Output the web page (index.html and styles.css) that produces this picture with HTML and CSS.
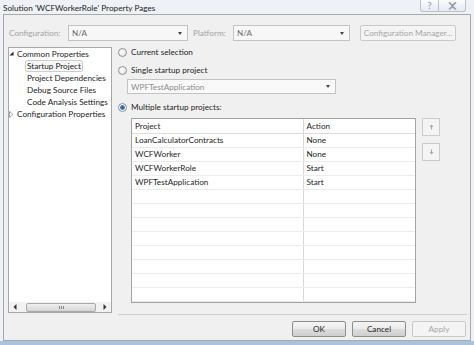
FILE: index.html
```html
<!DOCTYPE html>
<html lang="en">
<head>
    <meta charset="UTF-8">
    <title>Solution 'WCFWorkerRole' Property Pages</title>
<link rel="stylesheet" href="styles.css">
</head>
<body>

<div class="window">
    <div class="titlebar">
        <span class="title">Solution 'WCFWorkerRole' Property Pages</span>
        <div class="caption-buttons">
            <span class="cap-btn help">?</span>
            <span class="cap-btn close">
                <svg width="9" height="8" viewBox="0 0 9 8"><path d="M1 0.5 L4.5 3 L8 0.5 M1 7.5 L4.5 5 L8 7.5 M1 0.5 L8 7.5 M8 0.5 L1 7.5" fill="none" stroke="#9aa1aa" stroke-width="1.3"/></svg>
            </span>
        </div>
    </div>

    <div class="dialog">
        <div class="config-row">
            <span class="label label-config">Configuration:</span>
            <div class="combo combo-config"><span>N/A</span><span class="arrow"></span></div>
            <span class="label label-platform">Platform:</span>
            <div class="combo combo-platform"><span>N/A</span><span class="arrow"></span></div>
            <button class="btn btn-manager" disabled>Configuration Manager...</button>
        </div>

        <div class="main">
            <div class="tree">
                <ul class="tree-list">
                    <li class="node parent">
                        <svg class="expander" width="5" height="5" viewBox="0 0 5 5"><path d="M4.5 0.5 L4.5 4.5 L0.5 4.5 Z" fill="#262626"/></svg>
                        Common Properties
                    </li>
                    <li class="node child selected">Startup Project</li>
                    <li class="node child">Project Dependencies</li>
                    <li class="node child">Debug Source Files</li>
                    <li class="node child">Code Analysis Settings</li>
                    <li class="node parent">
                        <svg class="expander" width="5" height="7" viewBox="0 0 5 7"><path d="M0.5 0.5 L4 3.5 L0.5 6.5 Z" fill="none" stroke="#a6a6a6"/></svg>
                        Configuration Properties
                    </li>
                </ul>
                <div class="hscroll">
                    <span class="scroll-arrow"><svg width="4" height="6" viewBox="0 0 4 6"><path d="M3.5 0 L0.5 3 L3.5 6 Z" fill="#333"/></svg></span>
                    <span class="scroll-thumb"><span class="grip"></span></span>
                    <span class="scroll-arrow"><svg width="4" height="6" viewBox="0 0 4 6"><path d="M0.5 0 L3.5 3 L0.5 6 Z" fill="#333"/></svg></span>
                </div>
            </div>

            <div class="page">
                <label class="radio-row">
                    <span class="radio"></span>
                    <span>Current selection</span>
                </label>
                <label class="radio-row row-single">
                    <span class="radio"></span>
                    <span>Single startup project</span>
                </label>
                <div class="combo combo-single"><span>WPFTestApplication</span><span class="arrow"></span></div>
                <label class="radio-row row-multi">
                    <span class="radio checked"></span>
                    <span>Multiple startup projects:</span>
                </label>

                <div class="grid-row">
                    <div class="grid">
                        <table>
                            <colgroup><col class="col-project"><col></colgroup>
                            <thead>
                                <tr><th>Project</th><th>Action</th></tr>
                            </thead>
                            <tbody>
                                <tr><td>LoanCalculatorContracts</td><td>None</td></tr>
                                <tr><td>WCFWorker</td><td>None</td></tr>
                                <tr><td>WCFWorkerRole</td><td>Start</td></tr>
                                <tr><td>WPFTestApplication</td><td>Start</td></tr>
                                <tr><td></td><td></td></tr>
                                <tr><td></td><td></td></tr>
                                <tr><td></td><td></td></tr>
                                <tr><td></td><td></td></tr>
                                <tr><td></td><td></td></tr>
                                <tr><td></td><td></td></tr>
                                <tr><td></td><td></td></tr>
                                <tr><td></td><td></td></tr>
                                <tr><td></td><td></td></tr>
                            </tbody>
                        </table>
                    </div>
                    <div class="move-buttons">
                        <span class="move-btn"><svg width="5" height="6" viewBox="0 0 5 6"><path d="M2.5 0.5 L4.5 3 L3 3 L3 5.5 L2 5.5 L2 3 L0.5 3 Z" fill="#a8a8a8"/></svg></span>
                        <span class="move-btn"><svg width="5" height="6" viewBox="0 0 5 6"><path d="M2.5 5.5 L4.5 3 L3 3 L3 0.5 L2 0.5 L2 3 L0.5 3 Z" fill="#a8a8a8"/></svg></span>
                    </div>
                </div>

                <div class="separator"></div>
            </div>
        </div>

        <div class="buttons">
            <button class="btn">OK</button>
            <button class="btn">Cancel</button>
            <button class="btn" disabled>Apply</button>
        </div>
    </div>

    <div class="frame-bottom"></div>
</div>

</body>
</html>
```

FILE: styles.css
```css
* {
  box-sizing: border-box;
}

body {
  margin: 0;
  font-family: Lato, "Open Sans", sans-serif;
  font-size: 8.2px;
  color: #1e1e1e;
}

.window {
  width: 474px;
  height: 345px;
  background: #eef2f6;
  display: flex;
  flex-direction: column;
  overflow: hidden;
}

/* title bar */
.titlebar {
  height: 14px;
  display: flex;
  justify-content: space-between;
  align-items: flex-start;
  padding-left: 3px;
}

.title {
  line-height: 16px;
  color: #1b1b1b;
}

.caption-buttons {
  display: flex;
  margin-right: 8px;
}

.cap-btn {
  width: 19px;
  height: 12px;
  border: 1px solid #b9c1cb;
  border-top: none;
  background: linear-gradient(#fbfcfd, #e6eaef);
  display: flex;
  align-items: center;
  justify-content: center;
  color: #9aa1aa;
  font-size: 9px;
  font-weight: bold;
  line-height: 1;
}

.cap-btn.help {
  border-radius: 0 0 0 3px;
}

.cap-btn.close {
  width: 27px;
  border-left: none;
  border-radius: 0 0 3px 0;
}

/* dialog body */
.dialog {
  flex: 1;
  margin: 0 3px;
  border: 1px solid #a9a9a9;
  background: #f0f0f0;
  display: flex;
  flex-direction: column;
  padding: 10px 3px 3px 4px;
}

.config-row {
  display: flex;
  align-items: center;
  height: 16px;
  padding-left: 1px;
}

.label {
  color: #a3a3a3;
}

.label-config {
  width: 59px;
}

.label-platform {
  width: 40px;
  margin-left: 5px;
}

.combo {
  height: 16px;
  border: 1px solid #c3c3c3;
  background: #f7f7f7;
  display: flex;
  align-items: center;
  justify-content: space-between;
  padding: 0 5px 0 3px;
  color: #6a6a6a;
}

.combo .arrow {
  width: 0;
  height: 0;
  border-left: 2.5px solid transparent;
  border-right: 2.5px solid transparent;
  border-top: 3px solid #444;
}

.combo-config {
  width: 120px;
}

.combo-platform {
  width: 117px;
}

.btn {
  font-family: inherit;
  font-size: inherit;
  height: 16px;
  width: 54px;
  padding: 0;
  border: 1px solid #8d8d8d;
  border-radius: 2px;
  background: linear-gradient(#f4f4f4 0%, #ebebeb 50%, #dddddd 51%, #cfcfcf 100%);
  color: #1e1e1e;
  white-space: nowrap;
}

.btn:disabled {
  border-color: #c9c9c9;
  background: #f4f4f4;
  color: #a6a6a6;
}

.btn-manager {
  width: 96px;
  margin-left: 10px;
}

/* main area */
.main {
  flex: 1;
  margin-top: 4px;
  display: flex;
}

.tree {
  width: 104px;
  height: 266px;
  margin-top: 2px;
  border: 1px solid #a8a8a8;
  background: #fff;
  display: flex;
  flex-direction: column;
}

.tree-list {
  list-style: none;
  margin: 0;
  padding: 0;
  flex: 1;
}

.node {
  position: relative;
  height: 12px;
  line-height: 12px;
  white-space: nowrap;
}

.node.parent {
  padding-left: 8px;
}

.node.child {
  padding-left: 18px;
}

.expander {
  position: absolute;
  left: 0;
  top: 3px;
}

.node.selected {
  margin-left: 16px;
  padding-left: 1px;
  width: 58px;
  border: 1px solid #cdcdcd;
  border-radius: 2px;
  background: #f7f7f7;
  line-height: 10px;
}

.hscroll {
  height: 10px;
  display: flex;
  align-items: center;
  background: #f2f2f2;
}

.scroll-arrow {
  width: 13px;
  display: flex;
  justify-content: center;
}

.scroll-thumb {
  width: 72px;
  height: 9px;
  margin: 0 2px 0 4px;
  border: 1px solid #a9a9a9;
  border-radius: 2px;
  background: linear-gradient(#eeeeee, #d6d6d6);
  display: flex;
  align-items: center;
  justify-content: center;
}

.grip {
  width: 5px;
  height: 3px;
  border-left: 1px solid #888;
  border-right: 1px solid #888;
  background: linear-gradient(90deg, transparent 40%, #888 40%, #888 60%, transparent 60%);
}

.page {
  flex: 1;
  display: flex;
  flex-direction: column;
}

.radio-row {
  height: 14px;
  display: flex;
  align-items: center;
  padding-left: 6px;
}

.row-single {
  margin-top: 4px;
}

.row-multi {
  margin-top: 6px;
}

.radio {
  width: 9px;
  height: 9px;
  margin-right: 4px;
  border: 1px solid #929292;
  border-radius: 50%;
  background: radial-gradient(circle at 40% 40%, #ffffff, #dcdcdc);
}

.radio.checked {
  background: radial-gradient(circle, #1f4f83 0, #4a8ac8 2px, #ffffff 3px, #e4e4e4 5px);
}

.combo-single {
  width: 209px;
  height: 15px;
  margin: 2px 0 0 15px;
  color: #8c8c8c;
  background: #f9f9f9;
}

.grid-row {
  display: flex;
  margin: 4px 0 0 19px;
}

.grid {
  width: 285px;
  height: 185px;
  border: 1px solid #a3a3a3;
  background: #fff;
  overflow: hidden;
}

table {
  width: 100%;
  border-collapse: collapse;
  table-layout: fixed;
}

.col-project {
  width: 171px;
}

th,
td {
  height: 14px;
  padding: 0 3px;
  text-align: left;
  font-weight: normal;
  border-bottom: 1px solid #ececec;
  border-left: 1px solid #d8d8d8;
  white-space: nowrap;
}

th {
  height: 14px;
  border-bottom-color: #dcdcdc;
}

th:first-child,
td:first-child {
  border-left: none;
}

.move-buttons {
  display: flex;
  flex-direction: column;
  gap: 7px;
  margin-left: 6px;
}

.move-btn {
  width: 18px;
  height: 18px;
  border: 1px solid #cbcbcb;
  background: #f4f4f4;
  display: flex;
  align-items: center;
  justify-content: center;
}

.separator {
  margin: auto 0 0 6px;
  height: 1px;
  background: #cfcfcf;
}

/* bottom buttons */
.buttons {
  display: flex;
  justify-content: flex-end;
  gap: 6px;
  margin-top: 6px;
  padding-right: 1px;
}

.frame-bottom {
  height: 4px;
  background: #a9c3de;
}
```
